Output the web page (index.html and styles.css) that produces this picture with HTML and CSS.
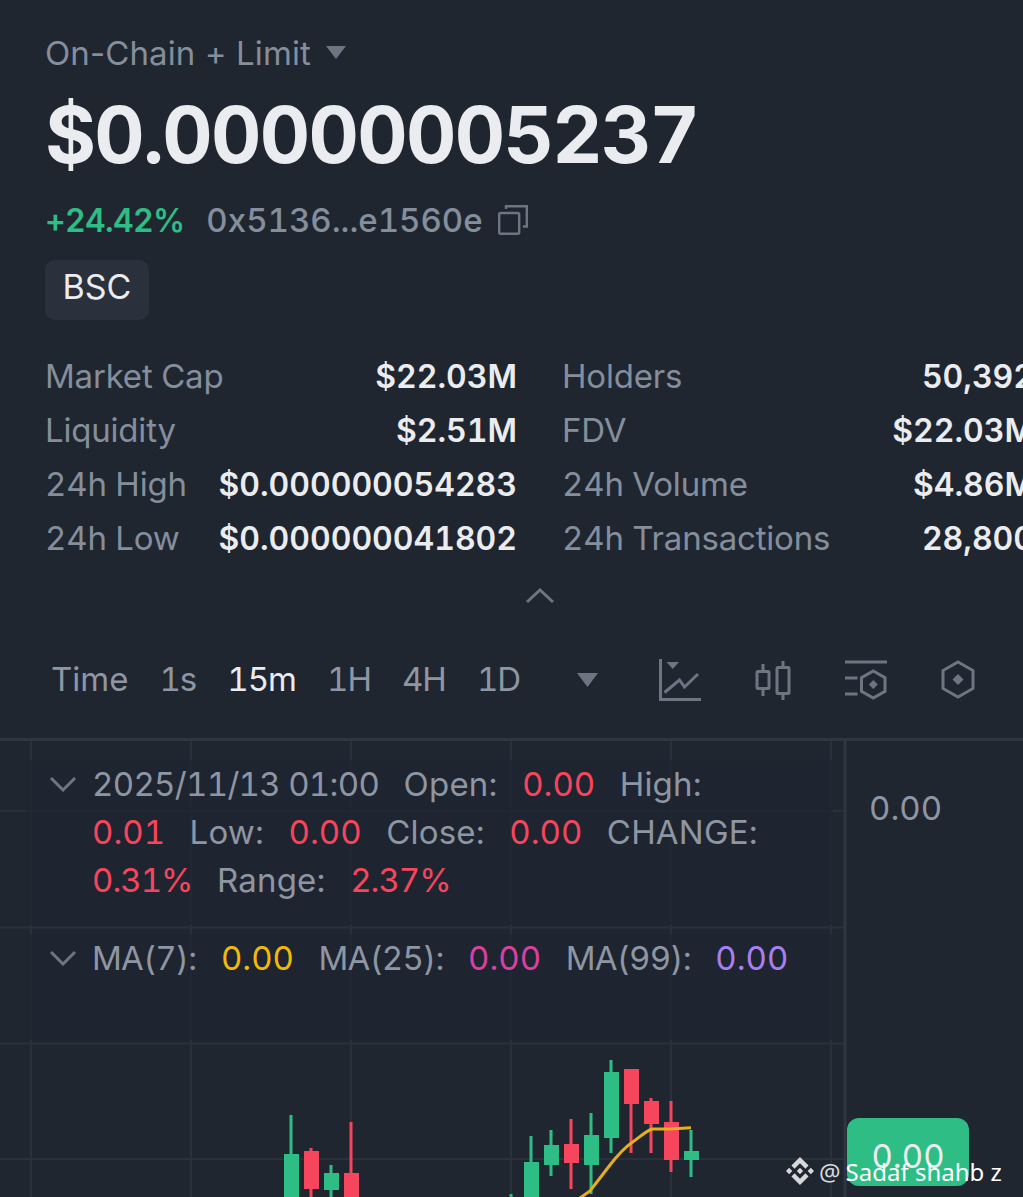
FILE: index.html
```html
<!DOCTYPE html>
<html lang="en">

<head>
    <meta charset="UTF-8">
    <meta name="viewport" content="width=device-width, initial-scale=1.0">
    <title>Token detail</title>
    <link rel="stylesheet" href="styles.css">
</head>

<body>
    <div class="head">
        <div class="source">On-Chain + Limit
            <svg class="tri" width="20" height="13" viewBox="0 0 20 13"><path d="M0 0H20L10 13Z" /></svg>
        </div>
        <div class="price">$0.00000005237</div>
        <div class="sub">
            <span class="up">+24.42%</span>
            <span class="addr">0x5136...e1560e</span>
            <svg class="copy" width="30" height="30" viewBox="0 0 30 30">
                <rect x="1.2" y="8" width="20" height="20.8" rx="1.5" />
                <path d="M8 4V1.2H28.8V21.5H25" />
            </svg>
        </div>
        <div class="tag">BSC</div>
        <div class="stats">
            <div class="row"><span>Market Cap</span><b>$22.03M</b></div>
            <div class="row"><span>Holders</span><b>50,392</b></div>
            <div class="row"><span>Liquidity</span><b>$2.51M</b></div>
            <div class="row"><span>FDV</span><b>$22.03M</b></div>
            <div class="row"><span>24h High</span><b>$0.000000054283</b></div>
            <div class="row"><span>24h Volume</span><b>$4.86M</b></div>
            <div class="row"><span>24h Low</span><b>$0.000000041802</b></div>
            <div class="row"><span>24h Transactions</span><b>28,800</b></div>
        </div>
        <svg class="collapse" width="30" height="17" viewBox="0 0 30 17"><path d="M2 15L15 3L28 15" /></svg>
    </div>

    <div class="tools">
        <span>Time</span>
        <span>1s</span>
        <span class="on">15m</span>
        <span>1H</span>
        <span>4H</span>
        <span>1D</span>
        <svg class="more" width="21" height="14" viewBox="0 0 21 14"><path d="M0 0H21L10.500 14Z" /></svg>
        <div class="icons">
            <svg width="42" height="42" viewBox="0 0 42 42">
                <path d="M1.500 0V40.500H42" />
                <path d="M5.500 33.500L20.500 21L25.500 28L39 15" />
                <path class="fill" d="M7.500 3H20L13.750 10Z" />
            </svg>
            <svg width="36" height="40" viewBox="0 0 36 40">
                <rect x="2" y="11.500" width="12" height="17" rx="1" />
                <rect x="22" y="7.500" width="12" height="26" rx="1" />
                <path d="M8 4V11.500M8 28.500V36M28 1V7.500M28 33.500V40" />
            </svg>
            <svg width="42" height="40" viewBox="0 0 42 40">
                <path d="M0 2H42M0 18H12.500M0 34H12.500" />
                <path d="M28.300 11L40 17.700V31.300L28.300 38L16.500 31.300V17.700Z" />
                <path class="fill" d="M28.300 20L32.800 24.500L28.300 29L23.800 24.500Z" />
            </svg>
            <svg width="34" height="40" viewBox="0 0 34 40">
                <path d="M17 2L32 10.500V28.500L17 37L2 28.500V10.500Z" />
                <path class="fill" d="M17 14L22.500 19.500L17 25L11.500 19.500Z" />
            </svg>
        </div>
    </div>

    <div class="chart">
        <svg class="plot" width="1023" height="457" viewBox="0 740 1023 457">
            <g class="grid">
                <path d="M31 740V1197M191 740V1197M351 740V1197M511 740V1197M671 740V1197M831 740V1197" />
                <path d="M0 810H845M0 926.500H845M0 1042.500H845M0 1158H845" />
            </g>
            <path class="axis" d="M845 740V1197" />
            <g class="green">
                <path d="M291 1114V1197M331 1164V1197M511 1193V1197M531 1135V1197M551 1129V1175M591 1112V1193M611 1059V1152M691 1129V1176" />
                <rect x="284" y="1153" width="15" height="44" />
                <rect x="324" y="1172" width="15" height="17" />
                <rect x="524" y="1161" width="15" height="36" />
                <rect x="544" y="1144" width="15" height="20" />
                <rect x="584" y="1134" width="15" height="30" />
                <rect x="604" y="1071" width="15" height="66" />
                <rect x="684" y="1150" width="15" height="9" />
            </g>
            <g class="red">
                <path d="M311 1147V1197M351 1121V1197M571 1118V1188M631 1068V1152M651 1097V1152M671 1100V1171" />
                <rect x="304" y="1150" width="15" height="38" />
                <rect x="344" y="1172" width="15" height="25" />
                <rect x="564" y="1143" width="15" height="19" />
                <rect x="624" y="1068" width="15" height="35" />
                <rect x="644" y="1100" width="15" height="23" />
                <rect x="664" y="1121" width="15" height="38" />
            </g>
            <path class="ma" d="M580 1197L590 1190L600 1177L610 1164C617 1155 624 1147 632 1141.500C640 1136 646 1130 652 1128L670 1128L691 1126.700" />
        </svg>

        <div class="legend ohlc">
            <svg class="fold" width="28" height="16" viewBox="0 0 28 16"><path d="M2 2L14 14L26 2" /></svg>
            <div class="vals">
                <span class="date">2025/11/13 01:00</span>
                <span>Open:</span><em>0.00</em>
                <span>High:</span><em>0.01</em>
                <span>Low:</span><em>0.00</em>
                <span>Close:</span><em>0.00</em>
                <span>CHANGE:</span><em class="pct">0.31%</em>
                <span>Range:</span><em class="pct">2.37%</em>
            </div>
        </div>

        <div class="legend mas">
            <svg class="fold" width="28" height="16" viewBox="0 0 28 16"><path d="M2 2L14 14L26 2" /></svg>
            <div class="vals">
                <span>MA(7):</span><em class="c7">0.00</em>
                <span>MA(25):</span><em class="c25">0.00</em>
                <span>MA(99):</span><em class="c99">0.00</em>
            </div>
        </div>

        <div class="tick">0.00</div>
        <div class="badge">0.00</div>
        <div class="mark">
            <svg width="28" height="28" viewBox="0 0 24 24"><path d="M16.624 13.9202l2.7175 2.7154-7.353 7.353-7.353-7.352 2.7175-2.7164 4.6355 4.6595 4.6356-4.6595zm4.6366-4.6366L24 12l-2.7154 2.7164L18.5682 12l2.6924-2.7164zm-9.272.001l2.7163 2.6914-2.7164 2.7174v-.001L9.2721 12l2.7164-2.7154zm-9.2722-.001L5.4088 12l-2.6914 2.6924L0 12l2.7164-2.7164zM11.9885.0115l7.353 7.329-2.7174 2.7154-4.6356-4.6356-4.6355 4.6595-2.7174-2.7154 7.353-7.353z" /></svg>
            <span class="at">@</span>
            <span>Sadaf shahb z</span>
        </div>
    </div>
</body>

</html>
```

FILE: styles.css
```css
html,
body {
    margin: 0;
    height: 1197px;
    overflow: hidden;
}

body {
    width: 1023px;
    background-color: #1f2630;
    color: #848e9c;
    font-family: Inter, "Liberation Sans", sans-serif;
    font-size: 33px;
    font-variant-numeric: tabular-nums;
}

.head {
    padding: 33px 0 0 45px;
}

.source {
    height: 40px;
    line-height: 40px;
    letter-spacing: .1px;
    font-variant-numeric: normal;
}

.tri {
    margin-left: 6px;
    vertical-align: 6px;
    fill: #6d7583;
}

.price {
    margin-top: 12px;
    height: 100px;
    line-height: 100px;
    font-size: 78px;
    font-weight: 700;
    letter-spacing: -1.700px;
    color: #eaecef;
}

.sub {
    display: flex;
    align-items: center;
    margin-top: 15px;
    height: 40px;
}

.up {
    color: #2ebd85;
    font-size: 32px;
    font-weight: 600;
    letter-spacing: -0.700px;
}

.addr {
    margin-left: 22px;
    font-weight: 500;
}

.copy {
    margin-left: 15px;
    fill: none;
    stroke: #6d7583;
    stroke-width: 2.4;
}

.tag {
    box-sizing: border-box;
    margin: 20px 0 0 0;
    width: 104px;
    height: 60px;
    line-height: 54px;
    text-align: center;
    border-radius: 10px;
    background-color: #2a313c;
    font-size: 34px;
    color: #eaecef;
}

.stats {
    display: grid;
    grid-template-columns: 472px 472px;
    column-gap: 45px;
    margin-top: 30px;
}

.row {
    display: flex;
    justify-content: space-between;
    height: 54px;
    line-height: 54px;
}

.row span {
    line-height: 52px;
    letter-spacing: -0.200px;
}

.row b {
    color: #eaecef;
    font-size: 32px;
    font-weight: 600;
}

.collapse {
    display: block;
    margin: 21px 0 0 480px;
    fill: none;
    stroke: #6d7583;
    stroke-width: 3;
}

.tools {
    display: flex;
    align-items: center;
    gap: 31px;
    margin-top: 56px;
    padding-left: 51px;
    height: 40px;
    color: #8f96a3;
}

.tools span {
    margin-top: -2px;
}

.tools span + span {
    letter-spacing: -1px;
}

.tools .on {
    color: #eaecef;
}

.more {
    margin-left: 26px;
    fill: #6d7583;
}

.icons {
    display: flex;
    align-items: center;
    gap: 54px;
    margin-left: 30px;
}

.icons svg {
    fill: none;
    stroke: #6d7583;
    stroke-width: 3;
}

.icons .fill {
    fill: #6d7583;
    stroke: none;
}

.chart {
    position: relative;
    margin-top: 38px;
    height: 459px;
    border-top: 3px solid #2f3642;
}

.plot {
    position: absolute;
    top: 0;
    left: 0;
}

.grid path {
    fill: none;
    stroke: #2a313c;
    stroke-width: 2;
}

.axis {
    fill: none;
    stroke: #2f3642;
    stroke-width: 3;
}

.green {
    fill: #2ebd85;
    stroke: #2ebd85;
}

.red {
    fill: #f6465d;
    stroke: #f6465d;
}

.green path,
.red path {
    stroke-width: 3;
}

.green rect,
.red rect {
    stroke: none;
}

.ma {
    fill: none;
    stroke: #e5ae1c;
    stroke-width: 3;
}

.legend {
    position: absolute;
    display: flex;
    left: 26px;
    padding: 0 0 0 23px;
    background-color: rgba(31, 38, 48, .75);
}

.ohlc {
    top: 19px;
    width: 784px;
    height: 165px;
}

.mas {
    top: 193px;
    width: 784px;
    height: 106px;
}

.fold {
    flex: none;
    margin-top: 16px;
    fill: none;
    stroke: #6d7583;
    stroke-width: 3;
}

.vals {
    display: flex;
    flex-wrap: wrap;
    column-gap: 24.500px;
    margin-left: 15px;
    width: 700px;
    align-content: flex-start;
    line-height: 48px;
    letter-spacing: .2px;
    color: #8f96a3;
}

.vals em {
    font-style: normal;
    letter-spacing: 0;
    color: #f6465d;
}

.vals .date {
    letter-spacing: -0.700px;
}

.vals .pct {
    letter-spacing: -1px;
}

.mas .vals {
    width: 740px;
    letter-spacing: -0.700px;
}

.vals .c7 {
    color: #f0b90b;
}

.vals .c25 {
    color: #d9409f;
}

.vals .c99 {
    color: #a97ff0;
}

.tick {
    position: absolute;
    top: 43px;
    left: 869px;
    line-height: 48px;
    color: #8f96a3;
}

.badge {
    position: absolute;
    top: 377px;
    left: 847px;
    width: 122px;
    height: 68px;
    line-height: 76px;
    text-align: center;
    border-radius: 12px;
    background-color: #2ebd85;
    color: #eaecef;
}

.mark {
    position: absolute;
    top: 412px;
    left: 786px;
    display: flex;
    align-items: center;
    gap: 5px;
    height: 36px;
    font-family: "Noto Sans", sans-serif;
    font-size: 24px;
    color: #fff;
}

.mark svg {
    fill: #d6d8db;
}

.mark .at {
    color: #d6d8db;
}
```
